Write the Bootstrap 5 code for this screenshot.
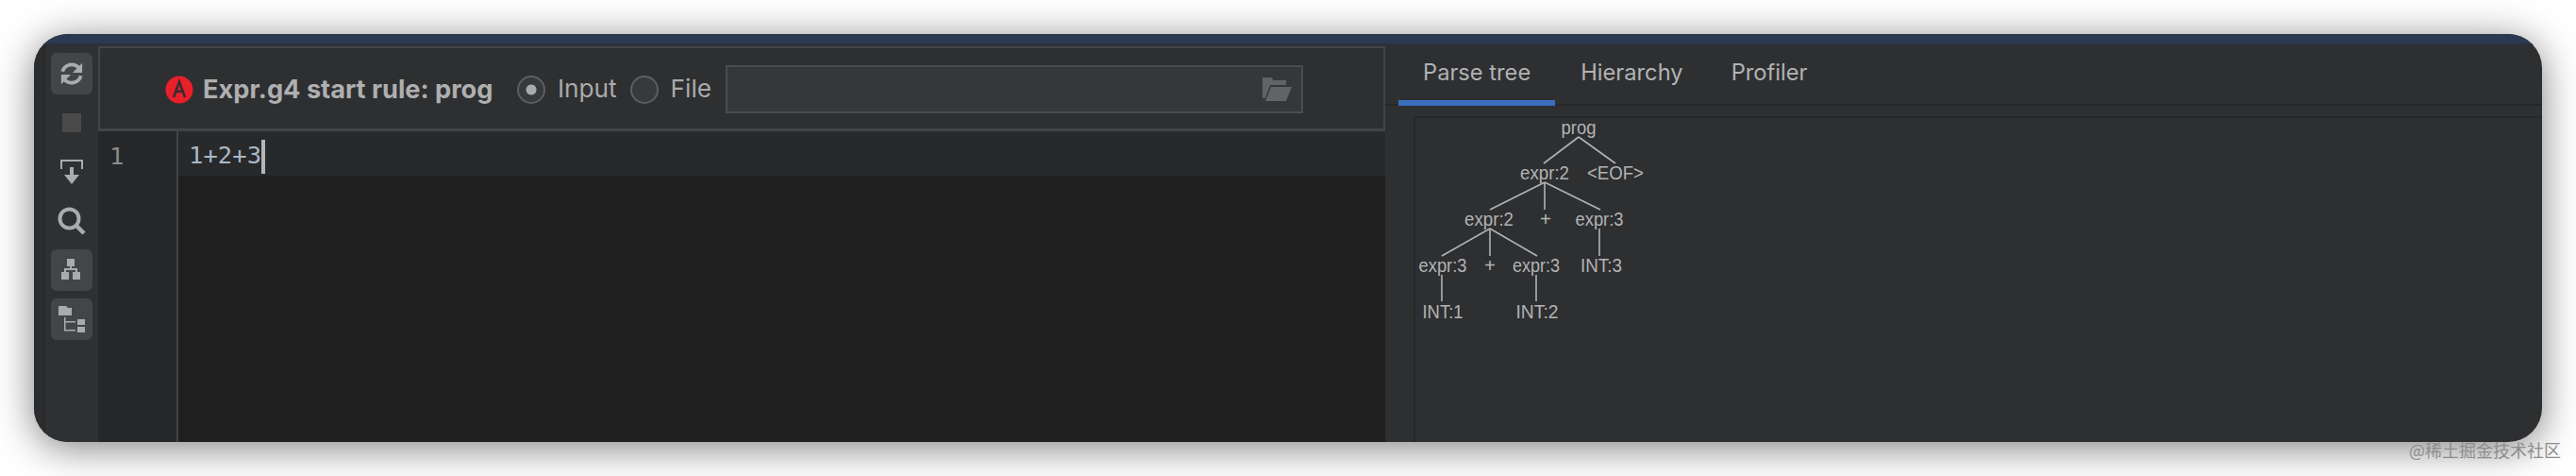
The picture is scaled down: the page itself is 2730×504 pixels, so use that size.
<!doctype html>
<html lang="en">
<head>
<meta charset="utf-8">
<title>ANTLR Preview</title>
<link href="https://cdn.jsdelivr.net/npm/bootstrap@5.3.0/dist/css/bootstrap.min.css" rel="stylesheet">
<style>
html,body{height:504px;background:#fff;overflow:hidden}
body{padding:36px;font-family:"Inter","Liberation Sans",sans-serif}
.ide{height:432px;width:2658px;border-radius:36px;overflow:hidden;background:#2e2f31;box-shadow:0 6px 42px rgba(0,0,0,.5)}
.titlestrip{height:12px;background:linear-gradient(#2b3a50 0,#2b3a50 9px,#292e37 12px);flex:none}
.edge{width:12px;background:#2b2c2e;border-right:1px solid #252628;flex:none}
.toolbar{width:56px;background:#2f3032;padding-top:8px;gap:8px;flex:none}
.toolcell{width:44px;height:44px;border-radius:6px}
.toolcell.on{background:#434547}
.stopbox{width:20px;height:20px;background:#4a4a4b}
.leftpane{width:1364px;flex:none;padding-top:1px}
.headbar{height:90px;border:2px solid #434446;border-bottom-width:3px;background:#2e2f31;padding-left:69px;padding-top:2px;flex:none}
.ruletitle{font-size:27.2px;font-weight:700;color:#aeafb0;margin-left:10px;line-height:1;width:333px}
.pick{font-size:26.2px;color:#a9aaab;line-height:1}
.form-check-input.radiodot{width:30px;height:30px;margin:0;background-color:#37393b;border:2px solid #5c5e60;box-shadow:none;background-image:none;flex:none}
.form-check-input.radiodot:checked{background-color:#37393b;border-color:#5c5e60;background-image:radial-gradient(circle,#a9aaab 0,#a9aaab 5px,transparent 6px)}
.lblinput{margin-left:13px;margin-right:14px}
.lblfile{margin-left:13px;margin-right:15px}
.pathbox{width:612px;height:51px;border:2px solid #4a4c4e;background:#35373a;padding-right:10px}
.editorarea{background:#202020}
.gutter{width:83px;background:#262729;color:#8b8c8d;font:25.6px "DejaVu Sans Mono","Liberation Mono",monospace;padding:11px 0 0 12px;flex:none;line-height:30px}
.gutterline{width:2px;background:#434446;flex:none}
.curline{height:47px;background:#28292b;color:#a9b7c6;font:25.6px "DejaVu Sans Mono","Liberation Mono",monospace;padding-left:11px;line-height:50px}
.caret-bar{display:inline-block;width:4px;height:36px;background:#b5b6b7;vertical-align:middle}
.rightpane{min-width:0}
.tabbar{height:64px;border-bottom:2px solid #262729;padding-left:14px;flex:none}
.tabitem{height:64px;font-size:23.7px;color:#b1b2b3;line-height:1;padding:17px 26px 0 26px;border-bottom:6px solid transparent}
.tabitem.sel{border-bottom-color:#3a6fbe}
.tabitem.rest{padding-left:27px;padding-right:24px}
.treegap{height:11px;flex:none}
.treepanel{margin-left:30px;border-top:2px solid #262729;border-left:2px solid #262729}
.treesvg{display:block;overflow:visible}
.treesvg text{font-family:"Liberation Sans",Arial,sans-serif;font-size:20.5px;fill:#b2b3b4;text-anchor:middle}
.treesvg line{stroke:#b2b3b4;stroke-width:1.6}
.watermark{position:absolute;left:2553px;top:466px;font:18px "Noto Sans CJK SC","Liberation Sans",sans-serif;color:#8d8d8d;line-height:1.2;white-space:nowrap}
</style>
</head>
<body>
<div class="ide d-flex flex-column">
  <div class="titlestrip"></div>
  <div class="d-flex flex-grow-1" style="min-height:0">
    <div class="edge"></div>
    <div class="toolbar d-flex flex-column align-items-center">
      <div class="toolcell on d-flex align-items-center justify-content-center">
        <svg width="26" height="26" viewBox="0 0 28 28" fill="none" stroke="#a9abae" stroke-width="4"><path d="M3.500 11.500A11 11 0 0 1 22 7"/><path d="M24.500 16.500A11 11 0 0 1 6 21"/><path d="M26 2v11H15z" fill="#a9abae" stroke="none"/><path d="M2 26V15h11z" fill="#a9abae" stroke="none"/></svg>
      </div>
      <div class="toolcell d-flex align-items-center justify-content-center"><div class="stopbox"></div></div>
      <div class="toolcell d-flex align-items-center justify-content-center">
        <svg width="24" height="26" viewBox="0 0 24 26" fill="#a9abae"><path d="M0 0h24v10h-2V2H2v8H0z"/><path d="M10 8h4v8h6l-8 10L4 16h6z"/></svg>
      </div>
      <div class="toolcell d-flex align-items-center justify-content-center">
        <svg width="30" height="30" viewBox="0 0 30 30" fill="none" stroke="#a9abae"><circle cx="12.500" cy="12.500" r="10" stroke-width="4"/><path d="M19.500 19.500l8.500 8.500" stroke-width="4.500"/></svg>
      </div>
      <div class="toolcell on d-flex align-items-center justify-content-center">
        <svg width="24" height="24" viewBox="0 0 24 24" fill="#a9abae"><path d="M7 0h8v8H7zM1 14h8v8H1zM13 14h8v8h-8z"/><path d="M10 8h2v2h6v4h-2v-2H6v2H4v-4h6z"/></svg>
      </div>
      <div class="toolcell on d-flex align-items-center justify-content-center">
        <svg width="30" height="30" viewBox="0 0 30 30" fill="#a9abae"><path d="M1 1h8l2 2h4v8H1z"/><path d="M7 13h1.500v4H19v1.500H8.500v7.500H19v1.500H7z"/><path d="M21 15h8v6h-8zM21 23h8v6h-8z"/></svg>
      </div>
    </div>
    <div class="leftpane d-flex flex-column">
      <div class="headbar d-flex align-items-center">
        <svg width="30" height="30" viewBox="0 0 30 30"><circle cx="15" cy="15" r="14.500" fill="#e8202a"/><path d="M9 23L15 6.500 21 23M11 17.500c4-1.500 6.500-1 8.500 0" fill="none" stroke="#3b2a2e" stroke-width="2.600"/></svg>
        <div class="ruletitle">Expr.g4 start rule: prog</div>
        <input class="form-check-input radiodot" type="radio" name="src" checked aria-label="Input">
        <span class="pick lblinput">Input</span>
        <input class="form-check-input radiodot" type="radio" name="src" aria-label="File">
        <span class="pick lblfile">File</span>
        <div class="pathbox d-flex align-items-center justify-content-end">
          <svg width="31" height="25" viewBox="0 0 31 25" fill="#616467"><path d="M0 0h9l3 3h13v5H8L3 22H0z"/><path d="M9 10h22l-6 15H3z"/></svg>
        </div>
      </div>
      <div class="editorarea d-flex flex-grow-1">
        <div class="gutter">1</div>
        <div class="gutterline"></div>
        <div class="flex-grow-1">
          <div class="curline">1+2+3<span class="caret-bar"></span></div>
        </div>
      </div>
    </div>
    <div class="rightpane d-flex flex-column flex-grow-1">
      <div class="tabbar d-flex">
        <div class="tabitem sel">Parse tree</div>
        <div class="tabitem rest">Hierarchy</div>
        <div class="tabitem rest">Profiler</div>
      </div>
      <div class="treegap"></div>
      <div class="treepanel flex-grow-1">
        <svg class="treesvg" width="320" height="343" viewBox="1500 125 320 343">
          <g>
            <line x1="1673" y1="145" x2="1636" y2="173"/><line x1="1673" y1="145" x2="1712" y2="173"/>
            <line x1="1637" y1="193" x2="1579" y2="222"/><line x1="1637" y1="193" x2="1637" y2="222"/><line x1="1637" y1="193" x2="1696" y2="222"/>
            <line x1="1579" y1="242" x2="1528" y2="271"/><line x1="1579" y1="242" x2="1579" y2="271"/><line x1="1579" y1="242" x2="1629" y2="271"/>
            <line x1="1695" y1="242" x2="1695" y2="271"/><line x1="1528" y1="291" x2="1528" y2="319"/><line x1="1628" y1="291" x2="1628" y2="319"/>
          </g>
          <text x="1673" y="142" textLength="37" lengthAdjust="spacingAndGlyphs">prog</text>
          <text x="1637" y="190" textLength="52" lengthAdjust="spacingAndGlyphs">expr:2</text>
          <text x="1712" y="190" textLength="60" lengthAdjust="spacingAndGlyphs">&lt;EOF&gt;</text>
          <text x="1578" y="239" textLength="52" lengthAdjust="spacingAndGlyphs">expr:2</text>
          <text x="1638" y="239">+</text>
          <text x="1695" y="239" textLength="51" lengthAdjust="spacingAndGlyphs">expr:3</text>
          <text x="1529" y="288" textLength="51" lengthAdjust="spacingAndGlyphs">expr:3</text>
          <text x="1579" y="288">+</text>
          <text x="1628" y="288" textLength="50" lengthAdjust="spacingAndGlyphs">expr:3</text>
          <text x="1697" y="288" textLength="44" lengthAdjust="spacingAndGlyphs">INT:3</text>
          <text x="1529" y="337" textLength="43" lengthAdjust="spacingAndGlyphs">INT:1</text>
          <text x="1629" y="337" textLength="45" lengthAdjust="spacingAndGlyphs">INT:2</text>
        </svg>
      </div>
    </div>
  </div>
</div>
<div class="watermark">@稀土掘金技术社区</div>
<script src="https://cdn.jsdelivr.net/npm/bootstrap@5.3.0/dist/js/bootstrap.bundle.min.js"></script>
</body>
</html>
